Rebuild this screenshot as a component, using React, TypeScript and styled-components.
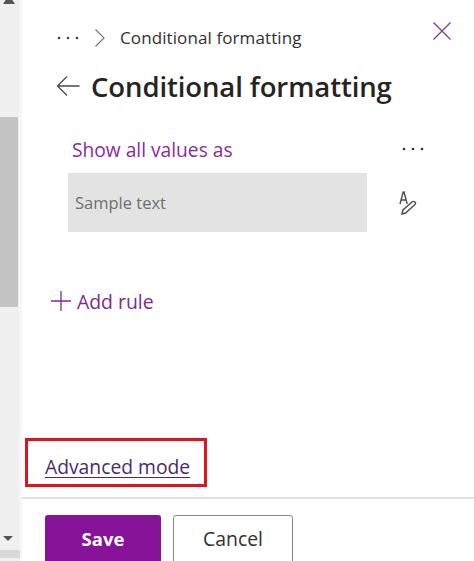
import React from "react";
import styled, { createGlobalStyle } from "styled-components";

const Global = createGlobalStyle`
  html, body { margin: 0; padding: 0; background: #fff; overflow: hidden; }
  body { font-family: "Open Sans", "Noto Sans", sans-serif; color: #252423; }
`;
const Page = styled.div`
  width: 474px; height: 561px; display: flex; overflow: hidden; background: #fff;
`;
const Scrollbar = styled.div`
  width: 22px; flex: none; background: linear-gradient(90deg, #f0f0f0 0 19px, #f6f6f6 19px 22px);
  display: flex; flex-direction: column; align-items: flex-start;
`;
const ArrowUp = styled.div`
  width: 0; height: 0; margin: -5px 0 0 3px;
  border-left: 6px solid transparent; border-right: 6px solid transparent; border-bottom: 9px solid #555;
`;
const Thumb = styled.div`
  width: 18px; height: 190px; margin-top: 113px; background: #c4c4c4;
`;
const ArrowDown = styled.div`
  width: 0; height: 0; margin: 229px 0 0 3px;
  border-left: 5px solid transparent; border-right: 5px solid transparent; border-top: 5px solid #555;
`;
const ScrollEnd = styled.div`
  width: 20px; height: 8px; margin-top: 9px; background: #d8d8d8;
`;
const Panel = styled.div`
  flex: 1; min-width: 0; display: flex; flex-direction: column;
`;
const Body = styled.div`
  flex: 1; min-height: 0; display: flex; flex-direction: column; padding: 20px 0 0 0;
`;
const Crumbs = styled.div`
  display: flex; align-items: center; height: 36px; padding: 0 20px 0 34px;
`;
const IconSlot = styled.span`
  display: inline-flex; flex: none; line-height: 0;
`;
const CrumbSep = styled(IconSlot)`
  margin-left: 14px;
`;
const CrumbText = styled.span`
  margin-left: 14px; margin-top: -1px; font-size: 17px; font-weight: 500; color: #323130; white-space: nowrap; letter-spacing: 0.1px;
`;
const Close = styled.span`
  margin-left: auto; margin-right: 2px; margin-top: -15px; line-height: 0; display: inline-flex;
`;
const TitleRow = styled.div`
  display: flex; align-items: center; gap: 11px; height: 40px; margin-top: 10px; padding-left: 34px;
`;
const Title = styled.h1`
  margin: 0; font-size: 27.5px; font-weight: 600; color: #252423; white-space: nowrap; letter-spacing: -0.1px;
`;
const RuleHead = styled.div`
  display: flex; align-items: center; justify-content: space-between; margin-top: 29px; height: 28px; padding: 0 49px 0 50px;
`;
const RuleLabel = styled.span`
  font-size: 19.2px; color: #8a2a9b; white-space: nowrap;
`;
const RuleBody = styled.div`
  display: flex; align-items: center; margin-top: 10px; padding-left: 46px;
`;
const Sample = styled.div`
  width: 299px; height: 59px; background: #e3e3e3; display: flex; align-items: center; padding: 0 0 0 7px; box-sizing: border-box;
  font-size: 16.5px; color: #6f6f6f;
`;
const EditSlot = styled.span`
  margin-left: 32px; line-height: 0; display: inline-flex;
`;
const AddRule = styled.div`
  display: flex; align-items: center; gap: 5px; margin-top: 53px; padding-left: 28px; height: 32px; font-size: 19.4px; color: #7d2a92;
`;
const Highlight = styled.div`
  width: 182px; height: 49px; box-sizing: border-box; border: 3px solid #e0141f; margin-top: auto; margin-left: 3px;
  display: flex; align-items: flex-end; padding: 0 0 5px 17px; margin-bottom: 10px;
`;
const AdvancedLink = styled.a`
  font-size: 19.3px; line-height: 24px; color: #4b2a6a; text-decoration: underline; text-underline-offset: 3px; white-space: nowrap;
`;
const Footer = styled.div`
  flex: none; height: 64px; box-sizing: border-box; border-top: 2px solid #e1e1e1; padding: 16px 0 0 23px; display: flex; gap: 12px;
`;
const Button = styled.button<{ $primary?: boolean }>`
  width: ${p => (p.$primary ? "116px" : "120px")}; height: 60px; flex: none; border-radius: 3px; box-sizing: border-box; padding: 0 0 14px;
  font-family: inherit; font-size: ${p => (p.$primary ? "18.5px" : "19.4px")}; font-weight: ${p => (p.$primary ? 700 : 500)};
  color: ${p => (p.$primary ? "#fff" : "#323130")};
  background: ${p => (p.$primary ? "#861398" : "#fff")};
  border: ${p => (p.$primary ? "none" : "1px solid #8a8886")};
`;

const Dots = ({ color = "#444" }: { color?: string }) => (
  <svg width="24" height="6" viewBox="0 0 24 6">
    <circle cx="3" cy="3" r="1.3" fill={color} /><circle cx="12" cy="3" r="1.3" fill={color} /><circle cx="21" cy="3" r="1.3" fill={color} />
  </svg>
);

export default function App() {
  return (
    <Page>
      <Global />
      <Scrollbar>
        <ArrowUp /><Thumb /><ArrowDown /><ScrollEnd />
      </Scrollbar>
      <Panel>
        <Body>
          <Crumbs>
            <IconSlot><Dots /></IconSlot>
            <CrumbSep>
              <svg width="12" height="20" viewBox="0 0 12 20"><path d="M1.500 1.500 10 10l-8.500 8.500" fill="none" stroke="#777" strokeWidth="1.2" /></svg>
            </CrumbSep>
            <CrumbText>Conditional formatting</CrumbText>
            <Close>
              <svg width="20" height="20" viewBox="0 0 20 20"><path d="M1.500 1.500 18.500 18.500M18.500 1.500 1.500 18.500" stroke="#7b3f98" strokeWidth="1.3" fill="none" /></svg>
            </Close>
          </Crumbs>
          <TitleRow>
            <IconSlot>
              <svg width="24" height="22" viewBox="0 0 24 22"><path d="M23.500 11H1.500M11 1.500 1.500 11l9.500 9.500" fill="none" stroke="#4a4a4a" strokeWidth="1.3" /></svg>
            </IconSlot>
            <Title>Conditional formatting</Title>
          </TitleRow>
          <RuleHead>
            <RuleLabel>Show all values as</RuleLabel>
            <IconSlot><Dots color="#333" /></IconSlot>
          </RuleHead>
          <RuleBody>
            <Sample>Sample text</Sample>
            <EditSlot>
              <svg width="18" height="24" viewBox="0 0 18 24" fill="none" stroke="#4d4d4d" strokeWidth="1.4">
                <path d="M1 13 4.200 1h.8L8.200 13M2.100 9h5" />
                <path d="M3 23l1-4 9-8c1-.9 2.300-.9 3 0 .7.800.6 1.900-.3 2.700L6.500 22z" />
              </svg>
            </EditSlot>
          </RuleBody>
          <AddRule>
            <IconSlot>
              <svg width="22" height="22" viewBox="0 0 22 22"><path d="M11 1v20M1 11h20" stroke="#7d2a92" strokeWidth="1.300" fill="none" /></svg>
            </IconSlot>
            Add rule
          </AddRule>
          <Highlight><AdvancedLink>Advanced mode</AdvancedLink></Highlight>
        </Body>
        <Footer>
          <Button $primary>Save</Button>
          <Button>Cancel</Button>
        </Footer>
      </Panel>
    </Page>
  );
}
